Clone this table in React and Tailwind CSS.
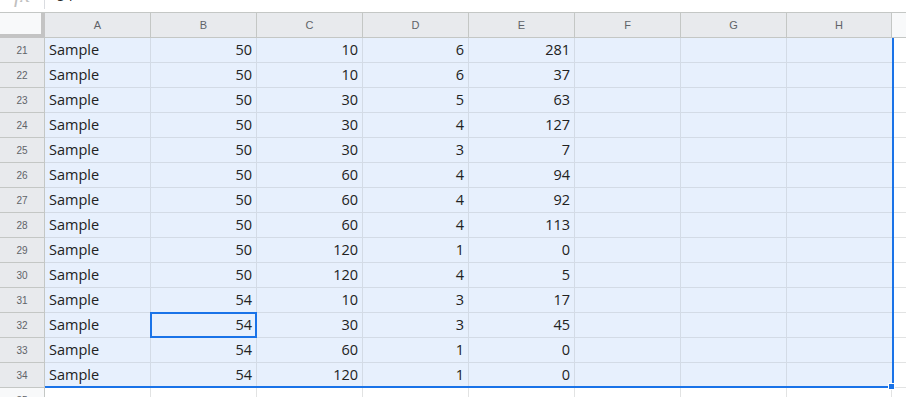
import React from "react";

const rows = [
  [21, 50, 10, 6, 281],
  [22, 50, 10, 6, 37],
  [23, 50, 30, 5, 63],
  [24, 50, 30, 4, 127],
  [25, 50, 30, 3, 7],
  [26, 50, 60, 4, 94],
  [27, 50, 60, 4, 92],
  [28, 50, 60, 4, 113],
  [29, 50, 120, 1, 0],
  [30, 50, 120, 4, 5],
  [31, 54, 10, 3, 17],
  [32, 54, 30, 3, 45],
  [33, 54, 60, 1, 0],
  [34, 54, 120, 1, 0],
];

const cols = ["A", "B", "C", "D", "E", "F", "G", "H"];

export default function App() {
  return (
    <div className="w-[906px] h-[397px] overflow-hidden bg-white relative" style={{ fontFamily: "'Open Sans', 'Noto Sans', sans-serif" }}>
      {/* formula bar */}
      <div className="h-[12px] overflow-hidden flex">
        <div className="w-[45px] flex justify-center border-r border-[#dadce0] h-[9px]">
          <span className="-mt-[15px] text-[22px] italic text-[#c0c0c0] leading-[20px]" style={{ fontFamily: "'Liberation Serif', serif" }}>fx</span>
        </div>
        <div className="pl-[12px] -mt-[14px] text-[14px] leading-[20px] text-[#222]">54</div>
      </div>
      {/* column header */}
      <div className="flex h-[26px] border-t border-[#c4c7c5] border-b border-[#c4c7c5]" style={{ fontFamily: "'Liberation Sans', Arial, sans-serif" }}>
        <div className="w-[45px] shrink-0 bg-[#f8f9fa] border-r-4 border-b-4 border-[#c4c4c4] -mb-px" />
        {cols.map((c, i) => (
          <div
            key={c}
            className={`shrink-0 ${i === 7 ? "w-[105px]" : "w-[106px]"} bg-[#e8eaed] border-r border-[#c4c7c5] flex items-center justify-center text-[11px] text-[#5f6368]`}
          >
            {c}
          </div>
        ))}
        <div className="flex-1 bg-[#f8f9fa]" />
      </div>
      {/* rows */}
      {rows.map((r) => {
        const [n, b, c, d, e] = r;
        const vals = ["Sample", b, c, d, e, "", "", ""];
        return (
          <div key={n} className="flex h-[25px]">
            <div className="w-[45px] shrink-0 bg-[#e8eaed] border-r border-b border-[#c4c7c5] flex items-center justify-center text-[10px] text-[#5f6368]" style={{ fontFamily: "'Liberation Sans', Arial, sans-serif" }}>
              {n}
            </div>
            {vals.map((v, i) => {
              const last = i === 7;
              const isActive = n === 32 && i === 1;
              return (
                <div
                  key={i}
                  className={`shrink-0 relative ${last ? "w-[105px]" : "w-[106px]"} h-[25px] bg-[#e7f0fd] border-b border-[#d3dbe6] ${last ? "" : "border-r"} flex items-center text-[14.5px] text-[#222] ${i === 0 ? "justify-start pl-[4px]" : "justify-end pr-[4px]"}`}
                >
                  {v}
                  {isActive && <div className="absolute -left-px -top-px w-[107px] h-[26px] border-2 border-[#1a73e8]" />}
                </div>
              );
            })}
            <div className="w-[2px] shrink-0 bg-[#1a73e8]" />
            <div className="flex-1 border-b border-[#e2e3e3]" />
          </div>
        );
      })}
      {/* selection bottom border */}
      <div className="flex h-[2px] -mt-[2px] relative">
        <div className="w-[45px] shrink-0" />
        <div className="w-[848px] bg-[#1a73e8]" />
      </div>
      {/* row 35 */}
      <div className="flex h-[25px]">
        <div className="w-[45px] shrink-0 bg-[#f8f9fa] border-r border-[#c4c7c5] flex items-start justify-center pt-[5px] text-[10px] text-[#5f6368]" style={{ fontFamily: "'Liberation Sans', Arial, sans-serif" }}>
          35
        </div>
        {cols.map((c, i) => (
          <div key={c} className={`shrink-0 ${i === 7 ? "w-[105px]" : "w-[106px]"} border-r border-[#e2e3e3]`} />
        ))}
        <div className="w-[2px]" />
      </div>
      {/* fill handle */}
      <div className="absolute left-[888px] top-[383px] w-[7px] h-[7px] bg-[#1a73e8] border border-white" />
    </div>
  );
}
